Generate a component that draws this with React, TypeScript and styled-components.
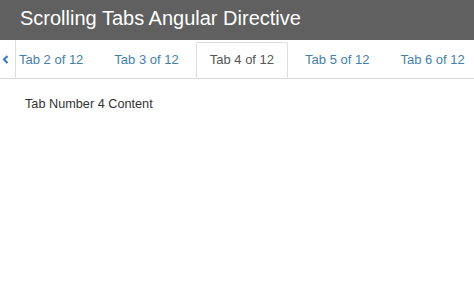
import React from 'react';
import styled, { createGlobalStyle } from 'styled-components';

const GlobalStyle = createGlobalStyle`
    html, body {
        margin: 0;
        padding: 0;
        background: #ffffff;
        font-family: "Liberation Sans", Arial, sans-serif;
    }
`;

const Header = styled.header`
    height: 40px;
    background-color: #606060;
    color: #ffffff;
    font-size: 20px;
    line-height: 36px;
    padding-left: 20px;
    box-sizing: border-box;
`;

const TabBar = styled.div`
    display: flex;
    margin-top: 2px;
    height: 36px;
    border-bottom: 1px solid #dddddd;
`;

const ScrollButton = styled.button`
    width: 16px;
    flex: none;
    margin-top: -2px;
    padding: 0 0 0 2px;
    border: none;
    border-right: 1px solid #dddddd;
    background: transparent;
    display: flex;
    align-items: center;
    justify-content: flex-start;
    cursor: pointer;
`;

const TabViewport = styled.div`
    flex: 1;
    overflow: hidden;
`;

const TabList = styled.ul`
    display: flex;
    list-style: none;
    margin: 0 0 0 -11px;
    padding: 0;
    white-space: nowrap;
`;

const Tab = styled.li<{ $active?: boolean }>`
    flex: none;
    line-height: 34px;
    padding: 0 13px;
    margin-right: 3px;
    font-size: 13px;
    box-sizing: border-box;
    border: 1px solid ${(p) => (p.$active ? '#dddddd' : 'transparent')};
    border-bottom-color: transparent;
    border-radius: 2px 2px 0 0;
    background: ${(p) => (p.$active ? '#ffffff' : 'transparent')};
    color: ${(p) => (p.$active ? '#555555' : '#4580ab')};
    height: ${(p) => (p.$active ? '37px' : '36px')};
    cursor: pointer;
`;

const Content = styled.div`
    padding: 18px 25px;
    font-size: 12.7px;
    color: #333333;
`;

const TAB_COUNT = 12;
// first tab scrolled out of view, only the ones that fit are rendered
const visibleTabs = [2, 3, 4, 5, 6];

const App = () => {
    const active = 4;
    return (
        <>
            <GlobalStyle />
            <Header>Scrolling Tabs Angular Directive</Header>
            <TabBar>
                <ScrollButton aria-label='scroll left'>
                    <svg width='7' height='9' viewBox='0 0 7 9'>
                        <path d='M5.5 1 L2 4.5 L5.5 8' fill='none' stroke='#3a7fc0' strokeWidth='2.2' />
                    </svg>
                </ScrollButton>
                <TabViewport>
                    <TabList>
                        {visibleTabs.map((n) => (
                            <Tab key={n} $active={n === active}>Tab {n} of {TAB_COUNT}</Tab>
                        ))}
                    </TabList>
                </TabViewport>
            </TabBar>
            <Content>Tab Number {active} Content</Content>
        </>
    );
};

export default App;
